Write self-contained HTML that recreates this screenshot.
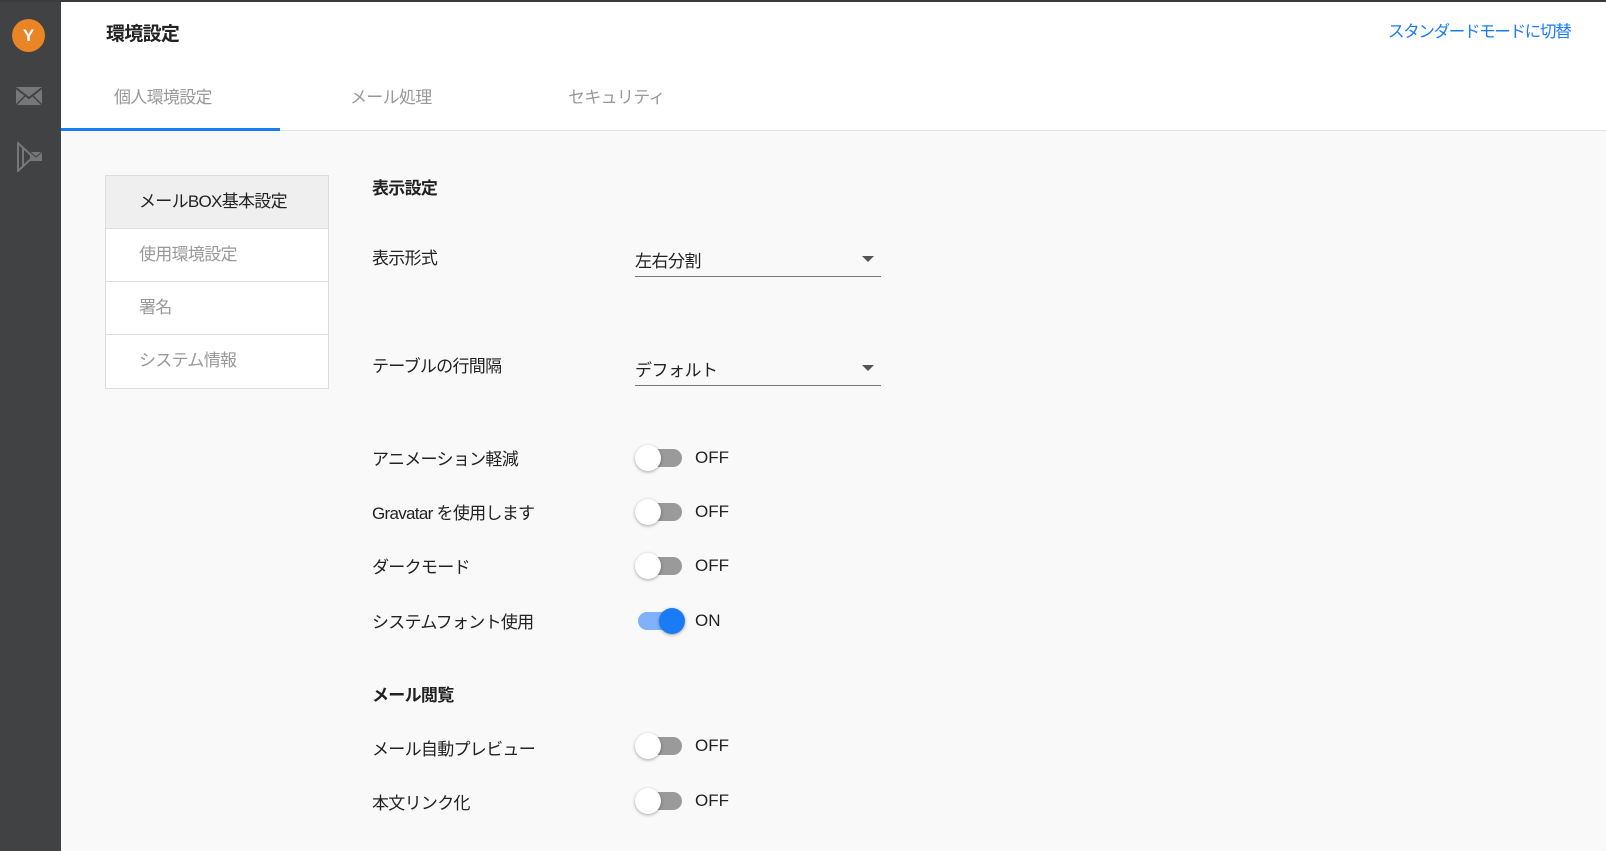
<!DOCTYPE html>
<html><head><meta charset="utf-8"><style>
*{box-sizing:border-box;margin:0;padding:0}
body{width:1606px;height:851px;overflow:hidden;background:#f9f9f9;font-family:"Liberation Sans","Noto Sans CJK JP",sans-serif;color:#222;position:relative}
.abs{position:absolute}
.side{left:0;top:0;width:61px;height:851px;background:#414244}
.topbar{left:0;top:0;width:1606px;height:2px;background:#3a3a3a}
.head{left:61px;top:2px;width:1545px;height:129px;background:#fff;border-bottom:1px solid #e2e2e2}
.t{font-size:17px;line-height:1;white-space:nowrap;letter-spacing:-0.7px}
.nav{left:105px;top:175px;width:224px;height:214px;border:1px solid #ddd;background:#fff}
.nav div{height:53px;border-bottom:1px solid #ddd;padding-left:33px;line-height:52px;font-size:17px;letter-spacing:-0.7px;color:#999}
.nav div:last-child{border-bottom:none}
.nav div.on{background:#efefef;color:#222}
.sel{left:635px;width:246px;height:30px;border-bottom:1.5px solid #777}
.sel span{position:absolute;left:0;top:0;font-size:17px;letter-spacing:-0.5px}
.sel i{position:absolute;right:7px;top:9px;border-left:6px solid transparent;border-right:6px solid transparent;border-top:6px solid #555}
.tg{left:635px;width:50px;height:26px}
.tg .tr{position:absolute;left:3px;top:4px;width:44px;height:18px;border-radius:9px;background:#9a9a9a}
.tg .kn{position:absolute;left:0;top:0;width:26px;height:26px;border-radius:50%;background:#fff;box-shadow:0 1px 3px rgba(0,0,0,.35)}
.tg.on .tr{background:#7fb2fb}
.tg.on .kn{left:24px;background:#1a7cf5}
.lbl{left:695px;letter-spacing:0}
</style></head><body>
<div class="abs side"></div>
<div class="abs topbar"></div>
<div class="abs" style="left:12px;top:19px;width:33px;height:33px;border-radius:50%;background:#ea8525;color:#fff;font-size:17px;font-weight:bold;text-align:center;line-height:33px">Y</div>
<svg class="abs" style="left:16px;top:87px" width="27" height="20" viewBox="0 0 27 20"><rect x="0" y="0" width="26" height="18" fill="#777"/><path d="M0 1 L13 11 L26 1" stroke="#414244" stroke-width="2" fill="none"/><path d="M0 18 L9 9 M26 18 L17 9" stroke="#414244" stroke-width="1.5"/></svg>
<svg class="abs" style="left:17px;top:142px" width="26" height="30" viewBox="0 0 26 30"><path d="M1 1 L1 29 L16 15 Z M6 5 L6 25" stroke="#777" stroke-width="2" fill="none"/><rect x="13" y="10" width="12" height="9" fill="#777"/><path d="M13 10 L19 15 L25 10" stroke="#414244" stroke-width="1" fill="none"/></svg>
<div class="abs head"></div>
<div class="abs t" style="left:106px;top:25px;font-size:19px;font-weight:bold">環境設定</div>
<div class="abs t" style="left:1388px;top:24px;color:#1a7cf5;font-size:16.5px;letter-spacing:-1.3px">スタンダードモードに切替</div>
<div class="abs t" style="left:114px;top:89px;color:#999">個人環境設定</div>
<div class="abs t" style="left:350px;top:89px;color:#999">メール処理</div>
<div class="abs t" style="left:568px;top:89px;color:#999">セキュリティ</div>
<div class="abs" style="left:61px;top:128px;width:219px;height:3px;background:#1a7cf5"></div>
<div class="abs nav"><div class="on">メールBOX基本設定</div><div>使用環境設定</div><div>署名</div><div>システム情報</div></div>
<div class="abs t" style="left:372px;top:180px;font-weight:bold">表示設定</div>
<div class="abs t" style="left:372px;top:250px">表示形式</div>
<div class="abs sel" style="top:247px"><span>左右分割</span><i></i></div>
<div class="abs t" style="left:372px;top:358px">テーブルの行間隔</div>
<div class="abs sel" style="top:356px"><span>デフォルト</span><i></i></div>
<div class="abs t" style="left:372px;top:451px">アニメーション軽減</div>
<div class="abs tg" style="top:445px"><div class="tr"></div><div class="kn"></div></div><div class="abs t lbl" style="top:449px">OFF</div>
<div class="abs t" style="left:372px;top:505px">Gravatar を使用します</div>
<div class="abs tg" style="top:499px"><div class="tr"></div><div class="kn"></div></div><div class="abs t lbl" style="top:503px">OFF</div>
<div class="abs t" style="left:372px;top:559px">ダークモード</div>
<div class="abs tg" style="top:553px"><div class="tr"></div><div class="kn"></div></div><div class="abs t lbl" style="top:557px">OFF</div>
<div class="abs t" style="left:372px;top:614px">システムフォント使用</div>
<div class="abs tg on" style="top:608px"><div class="tr"></div><div class="kn"></div></div><div class="abs t lbl" style="top:612px">ON</div>
<div class="abs t" style="left:372px;top:687px;font-weight:bold">メール閲覧</div>
<div class="abs t" style="left:372px;top:741px">メール自動プレビュー</div>
<div class="abs tg" style="top:733px"><div class="tr"></div><div class="kn"></div></div><div class="abs t lbl" style="top:737px">OFF</div>
<div class="abs t" style="left:372px;top:795px">本文リンク化</div>
<div class="abs tg" style="top:788px"><div class="tr"></div><div class="kn"></div></div><div class="abs t lbl" style="top:792px">OFF</div>
</body></html>
